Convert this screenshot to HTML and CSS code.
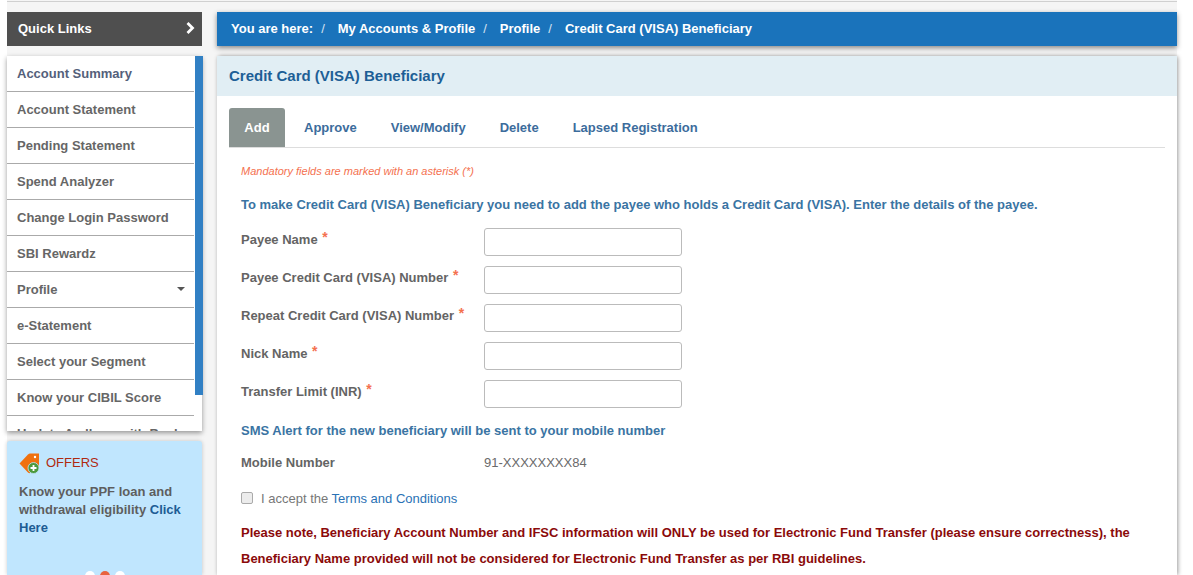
FILE: index.html
```html
<!DOCTYPE html>
<html lang="en">
<head>
    <meta charset="UTF-8">
    <title>Credit Card (VISA) Beneficiary</title>
    <link rel="stylesheet" href="styles.css">
</head>
<body>
    <div class="page">
        <div class="topline"></div>
        <div class="wrapper">
            <aside class="sidebar">
                <div class="quick-head">
                    <span>Quick Links</span>
                    <svg class="quick-arrow" width="10" height="12" viewBox="0 0 10 12"><path d="M2.5 1 L7.5 6 L2.5 11" fill="none" stroke="#fff" stroke-width="2.8"/></svg>
                </div>
                <div class="quick-panel">
                    <div class="quick-clip">
                        <ul class="quick-list">
                            <li class="first">Account Summary</li>
                            <li>Account Statement</li>
                            <li>Pending Statement</li>
                            <li>Spend Analyzer</li>
                            <li>Change Login Password</li>
                            <li>SBI Rewardz</li>
                            <li class="has-sub">Profile <span class="caret"></span></li>
                            <li>e-Statement</li>
                            <li>Select your Segment</li>
                            <li>Know your CIBIL Score</li>
                            <li>Update Aadhaar with Bank</li>
                        </ul>
                    </div>
                    <div class="scrollbar"></div>
                </div>
                <div class="offers">
                    <div class="offers-head">
                        <svg width="21" height="21" viewBox="0 0 21 21">
                            <path d="M0.5 10.5 L9 1.5 Q10 0.5 11 0.5 L20 0.5 L20 15 L11 20 Q10 20.5 9 19.5 Z" fill="#f0710e"/>
                            <circle cx="16" cy="4" r="1.2" fill="#fff"/>
                            <circle cx="14.5" cy="15" r="5.5" fill="#4c9a3c" stroke="#c0e6fe" stroke-width="0.8"/>
                            <path d="M14.5 12 V18 M11.5 15 H17.5" stroke="#fff" stroke-width="1.8"/>
                        </svg>
                        <span>OFFERS</span>
                    </div>
                    <p class="offers-text">Know your PPF loan and withdrawal eligibility <a href="#">Click Here</a></p>
                    <div class="dots"><i></i><i class="on"></i><i></i></div>
                </div>
            </aside>
            <main class="content">
                <div class="crumbs">
                    <span class="crumb-label">You are here:</span><span class="sep">/</span><span>My Accounts &amp; Profile</span><span class="sep">/</span><span>Profile</span><span class="sep">/</span><span>Credit Card (VISA) Beneficiary</span>
                </div>
                <section class="card">
                    <h2 class="card-title">Credit Card (VISA) Beneficiary</h2>
                    <div class="card-body">
                        <div class="tabs">
                            <a class="tab active">Add</a>
                            <a class="tab">Approve</a>
                            <a class="tab">View/Modify</a>
                            <a class="tab">Delete</a>
                            <a class="tab">Lapsed Registration</a>
                        </div>
                        <div class="form-area">
                            <p class="mandatory">Mandatory fields are marked with an asterisk (*)</p>
                            <p class="intro">To make Credit Card (VISA) Beneficiary you need to add the payee who holds a Credit Card (VISA). Enter the details of the payee.</p>
                            <div class="row"><label>Payee Name <b>*</b></label><input type="text"></div>
                            <div class="row"><label>Payee Credit Card (VISA) Number <b>*</b></label><input type="text"></div>
                            <div class="row"><label>Repeat Credit Card (VISA) Number <b>*</b></label><input type="text"></div>
                            <div class="row"><label>Nick Name <b>*</b></label><input type="text"></div>
                            <div class="row"><label>Transfer Limit (INR) <b>*</b></label><input type="text"></div>
                            <p class="sms">SMS Alert for the new beneficiary will be sent to your mobile number</p>
                            <div class="mobile"><label>Mobile Number</label><span>91-XXXXXXXX84</span></div>
                            <div class="terms"><input type="checkbox"><span>I accept the <a href="#">Terms and Conditions</a></span></div>
                            <p class="note">Please note, Beneficiary Account Number and IFSC information will ONLY be used for Electronic Fund Transfer (please ensure correctness), the Beneficiary Name provided will not be considered for Electronic Fund Transfer as per RBI guidelines.</p>
                        </div>
                    </div>
                </section>
            </main>
        </div>
    </div>
</body>
</html>
```

FILE: styles.css
```css
html, body {
    height: 575px;
    overflow: hidden;
}
body {
    margin: 0;
    background-color: #fff;
    font-family: "Liberation Sans", Arial, sans-serif;
    font-size: 13px;
    color: #646464;
}
.page {
    height: 575px;
    margin: 0 16px 0 7px;
    padding-top: 1px;
    box-sizing: border-box;
    background-color: #f5f5f5;
}
.topline {
    height: 1px;
    background-color: #d0d0d0;
}
.wrapper {
    display: flex;
    padding-top: 10px;
    gap: 15px;
}

/* Quick links */
.sidebar {
    width: 195px;
    flex: none;
}
.quick-head {
    display: flex;
    align-items: center;
    justify-content: space-between;
    height: 34px;
    padding: 0 7px 2px 11px;
    box-sizing: border-box;
    background-color: #4f4f4f;
    color: #fff;
    font-weight: bold;
}
.quick-panel {
    position: relative;
    height: 375px;
    margin-top: 10px;
    background-color: #fff;
    box-shadow: 0 2px 5px rgba(0, 0, 0, 0.4);
}
.quick-clip {
    height: 375px;
    overflow: hidden;
}
.quick-list {
    list-style: none;
    margin: 0;
    padding: 0;
    width: 187px;
}
.quick-list li {
    display: flex;
    align-items: center;
    justify-content: space-between;
    box-sizing: border-box;
    height: 36px;
    padding: 0 10px 1px;
    border-bottom: 1px solid #aaa;
    font-weight: bold;
    white-space: nowrap;
    color: #666;
}
.quick-list li.first {
    color: #54607a;
}
.caret {
    width: 0;
    height: 0;
    margin-right: -1px;
    border-left: 4px solid transparent;
    border-right: 4px solid transparent;
    border-top: 4px solid #555;
}
.scrollbar {
    position: absolute;
    top: 0;
    right: -1px;
    width: 8px;
    height: 339px;
    background-color: #3180c4;
}

/* Offers */
.offers {
    height: 134px;
    overflow: hidden;
    margin-top: 10px;
    padding: 12px 12px 0;
    box-sizing: border-box;
    border-radius: 3px 3px 0 0;
    background-color: #c0e6fe;
    box-shadow: 0 0 4px rgba(0, 0, 0, 0.2);
}
.offers-head {
    display: flex;
    align-items: center;
    gap: 6px;
    height: 21px;
    color: #b02a10;
}
.offers-head span {
    padding-bottom: 2px;
}
.offers-text {
    margin: 9px 0 0;
    line-height: 18px;
    font-weight: bold;
    color: #5e5e5e;
}
.offers-text a {
    color: #1d5c94;
    text-decoration: none;
}
.dots {
    display: flex;
    justify-content: center;
    gap: 5px;
    margin-top: 34px;
}
.dots i {
    width: 10px;
    height: 10px;
    border-radius: 50%;
    background-color: #fff;
}
.dots i.on {
    background-color: #e8633f;
}

/* Main */
.content {
    flex: 1;
    min-width: 0;
}
.crumbs {
    display: flex;
    align-items: center;
    height: 34px;
    padding: 0 0 2px 14px;
    box-sizing: border-box;
    background-color: #1a73bb;
    color: #fff;
    font-weight: bold;
    box-shadow: 0 2px 5px rgba(0, 0, 0, 0.45);
}
.sep {
    margin: 0 13px 0 8px;
    font-weight: normal;
    opacity: 0.8;
}
.card {
    margin-top: 10px;
    height: 519px;
    background-color: #fff;
    border-radius: 3px 3px 0 0;
    box-shadow: 1px 0 4px rgba(0, 0, 0, 0.4);
}
.card-title {
    margin: 0;
    height: 40px;
    padding-left: 12px;
    background-color: #e1eef4;
    color: #1d5f96;
    font-size: 15px;
    line-height: 40px;
}
.card-body {
    padding: 12px 12px 0;
}
.tabs {
    display: flex;
    height: 39px;
    border-bottom: 1px solid #ddd;
}
.tab {
    padding: 0 17px;
    color: #3c6c9c;
    font-weight: bold;
    line-height: 40px;
}
.tab.active {
    width: 56px;
    box-sizing: border-box;
    padding: 0;
    text-align: center;
    margin-right: 2px;
    background-color: #8a9491;
    color: #fff;
    border-radius: 3px 3px 0 0;
}
.form-area {
    padding-left: 12px;
}
.mandatory {
    margin: 16px 0 0;
    font-size: 11px;
    line-height: 14px;
    font-style: italic;
    color: #f4714f;
}
.intro, .sms {
    margin: 0;
    color: #3a74a3;
    font-weight: bold;
    line-height: 16px;
}
.intro {
    margin-top: 19px;
}
.row {
    display: flex;
    align-items: flex-start;
    height: 28px;
    margin-top: 10px;
}
.intro + .row {
    margin-top: 15px;
}
.row label, .mobile label {
    width: 243px;
    flex: none;
    font-weight: bold;
    line-height: 24px;
}
.row label b {
    color: #f4714f;
    margin-left: 1px;
    font-size: 14px;
    line-height: 0;
    vertical-align: 2px;
}
.row input {
    width: 198px;
    height: 28px;
    box-sizing: border-box;
    background-color: #fff;
    border: 1px solid #bbb;
    border-radius: 3px;
}
.sms {
    margin-top: 15px;
}
.mobile {
    display: flex;
    align-items: center;
    margin-top: 16px;
    height: 16px;
}
.mobile span {
    padding-bottom: 2px;
    color: #6a6a6a;
}
.terms {
    display: flex;
    align-items: center;
    margin-top: 19px;
    height: 16px;
    color: #777;
}
.terms input {
    appearance: none;
    width: 12px;
    height: 12px;
    margin: 0 8px 0 0;
    background-color: #ececec;
    border: 1px solid #aaa;
    border-radius: 2px;
}
.terms a {
    color: #2a72b5;
    text-decoration: none;
}
.note {
    margin: 14px 0 0;
    padding-right: 12px;
    color: #8b0a0a;
    font-weight: bold;
    line-height: 26px;
}
```
